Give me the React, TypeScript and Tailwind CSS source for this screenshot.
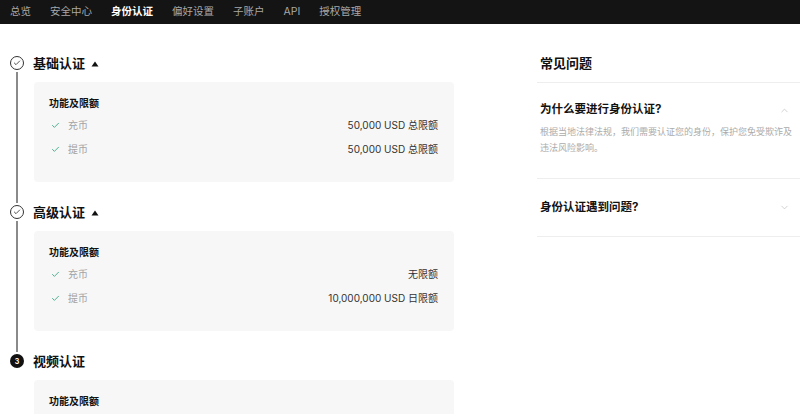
import { Check, ChevronDown, ChevronUp } from "lucide-react";

const tabs = ["总览", "安全中心", "身份认证", "偏好设置", "子账户", "API", "授权管理"];

interface Row {
    label: string;
    value: string;
}

interface Step {
    title: string;
    done: boolean;
    index: number;
    open: boolean;
    rows: Row[];
}

const steps: Step[] = [
    {
        title: "基础认证",
        done: true,
        index: 1,
        open: true,
        rows: [
            { label: "充币", value: "50,000 USD 总限额" },
            { label: "提币", value: "50,000 USD 总限额" },
        ],
    },
    {
        title: "高级认证",
        done: true,
        index: 2,
        open: true,
        rows: [
            { label: "充币", value: "无限额" },
            { label: "提币", value: "10,000,000 USD 日限额" },
        ],
    },
    {
        title: "视频认证",
        done: false,
        index: 3,
        open: false,
        rows: [
            { label: "充币", value: "无限额" },
            { label: "提币", value: "无限额" },
        ],
    },
];

function StepMarker({ step }: { step: Step }) {
    if (step.done) {
        return (
            <div className="w-[14px] h-[14px] rounded-full border border-[#333] bg-white flex items-center justify-center">
                <Check size={8} strokeWidth={2.5} color="#333" />
            </div>
        );
    }
    return (
        <div className="w-[14px] h-[14px] rounded-full bg-[#111] flex items-center justify-center text-white text-[7px] font-bold leading-none">
            {step.index}
        </div>
    );
}

export default function App() {
    return (
        <div
            className="min-h-screen bg-white text-[#111]"
            style={{ fontFamily: 'Inter, "Noto Sans CJK SC", sans-serif' }}
        >
            {/* Top nav */}
            <div className="h-[24px] bg-[#141414] flex items-center gap-[19px] px-[10px]">
                {tabs.map((t) => (
                    <span
                        key={t}
                        className={
                            t === "身份认证"
                                ? "text-[10.5px] text-white font-bold leading-none"
                                : "text-[10.5px] text-[#a8a8a8] leading-none"
                        }
                    >
                        {t}
                    </span>
                ))}
            </div>

            <div className="flex pt-[30px]">
                {/* Left: verification timeline */}
                <div className="w-[454px] pl-[10px] flex flex-col">
                    {steps.map((step, i) => (
                        <div key={step.title} className="flex">
                            <div className="w-[14px] flex flex-col items-center">
                                <div className="h-[18px] flex items-center">
                                    <StepMarker step={step} />
                                </div>
                                {i < steps.length - 1 && <div className="w-[1.5px] flex-1 bg-[#8a8a8a]" />}
                            </div>
                            <div className="flex-1 pl-[9px] pb-[21px]">
                                <div className="h-[18px] flex items-center gap-[6px]">
                                    <span className="text-[13px] font-bold leading-none">{step.title}</span>
                                    {step.open && (
                                        <svg width="8" height="6" viewBox="0 0 8 6" className="mt-[1px]">
                                            <path d="M4 0.5 L7.5 5.5 L0.5 5.5 Z" fill="#111" />
                                        </svg>
                                    )}
                                </div>
                                <div className="mt-[10px] ml-[1px] bg-[#f7f7f7] rounded-[4px] pl-[15px] pr-[16px] pt-[16px] pb-[27px]">
                                    <div className="text-[10px] font-bold leading-none mb-[11px]">功能及限额</div>
                                    <div className="flex flex-col gap-[12px]">
                                        {step.rows.map((r) => (
                                            <div key={r.label} className="flex items-center justify-between h-[12px]">
                                                <div className="flex items-center gap-[8px] pl-[2px]">
                                                    <Check size={9} strokeWidth={2.5} color="#3fae8c" />
                                                    <span className="text-[10px] text-[#a3a3a3] leading-none">{r.label}</span>
                                                </div>
                                                <span className="text-[10px] text-[#333] leading-none">{r.value}</span>
                                            </div>
                                        ))}
                                    </div>
                                </div>
                            </div>
                        </div>
                    ))}
                </div>

                {/* Right: FAQ */}
                <div className="ml-[83px] flex-1 flex flex-col">
                    <div className="h-[18px] flex items-center pl-[3px]">
                        <span className="text-[13px] font-bold leading-none">常见问题</span>
                    </div>
                    <div className="mt-[10px] h-px bg-[#eeeeee]" />

                    <div className="pl-[3px] pt-[19px] pb-[22px]">
                        <div className="flex items-center justify-between h-[16px] pr-[10px]">
                            <span className="text-[11.5px] font-bold leading-none">为什么要进行身份认证?</span>
                            <ChevronUp size={11} strokeWidth={1.5} color="#bdbdbd" />
                        </div>
                        <p className="mt-[6px] text-[9px] leading-[16px] text-[#ababab]">
                            根据当地法律法规，我们需要认证您的身份，保护您免受欺诈及违法风险影响。
                        </p>
                    </div>
                    <div className="h-px bg-[#eeeeee]" />

                    <div className="pl-[3px] pr-[10px] h-[57px] flex items-center justify-between">
                        <span className="text-[11.5px] font-bold leading-none">身份认证遇到问题?</span>
                        <ChevronDown size={11} strokeWidth={1.5} color="#bdbdbd" />
                    </div>
                    <div className="h-px bg-[#eeeeee]" />
                </div>
            </div>
        </div>
    );
}
